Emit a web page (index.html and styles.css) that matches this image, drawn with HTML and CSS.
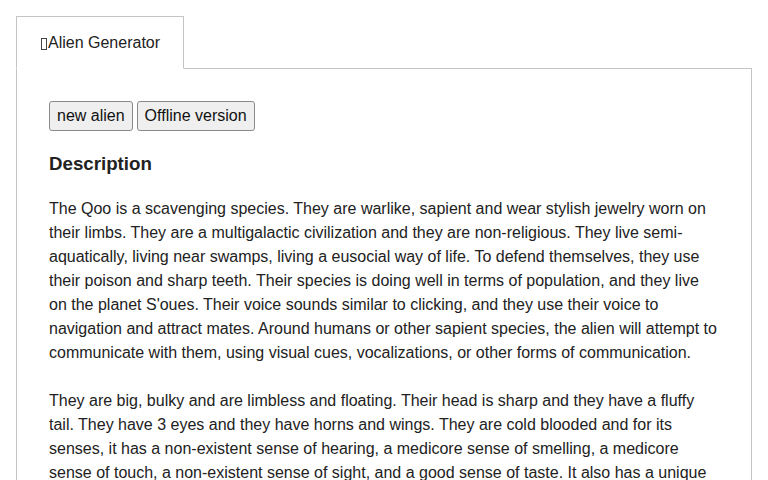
FILE: index.html
```html
<!DOCTYPE html>
<html lang="en">
<head>
<meta charset="utf-8">
<title>Alien Generator</title>
<link rel="stylesheet" href="styles.css">
</head>
<body>
<div class="page">
  <div class="tabs">
    <div class="tab"><span class="tofu"></span>Alien Generator</div>
  </div>
  <div class="panel">
    <div class="actions">
      <button class="btn">new alien</button>
      <button class="btn">Offline version</button>
    </div>
    <h3 class="heading">Description</h3>
    <p class="para">The Qoo is a scavenging species. They are warlike, sapient and wear stylish jewelry worn on their limbs. They are a multigalactic civilization and they are non-religious. They live semi-aquatically, living near swamps, living a eusocial way of life. To defend themselves, they use their poison and sharp teeth. Their species is doing well in terms of population, and they live on the planet S'oues. Their voice sounds similar to clicking, and they use their voice to navigation and attract mates. Around humans or other sapient species, the alien will attempt to communicate with them, using visual cues, vocalizations, or other forms of communication.</p>
    <p class="para">They are big, bulky and are limbless and floating. Their head is sharp and they have a fluffy tail. They have 3 eyes and they have horns and wings. They are cold blooded and for its senses, it has a non-existent sense of hearing, a medicore sense of smelling, a medicore sense of touch, a non-existent sense of sight, and a good sense of taste. It also has a unique ability to sense changes in the magnetic field around it.</p>
  </div>
</div>
</body>
</html>
```
FILE: styles.css
```css
html, body {
  margin: 0;
  padding: 0;
  background: #fff;
}
body {
  font-family: "Liberation Sans", Arial, sans-serif;
  font-size: 16px;
  color: #222;
  overflow: hidden;
}
.page {
  padding: 16px;
}
.tabs {
  display: flex;
}
.tab {
  position: relative;
  z-index: 1;
  margin-bottom: -1px;
  padding: 17px 23px 16px 24px;
  line-height: 18px;
  border: 1px solid #c4c4c4;
  border-bottom: 1px solid #fff;
  background: #fff;
  color: #222;
  display: flex;
  align-items: center;
}
.tofu {
  display: inline-block;
  width: 4px;
  height: 10px;
  border: 1px solid #444;
  margin: 1px 1px 0 0;
}
.panel {
  border: 1px solid #c4c4c4;
  padding: 32px 32px 40px 32px;
}
.actions {
  display: flex;
  gap: 4px;
}
.btn {
  font-family: "Liberation Sans", Arial, sans-serif;
  font-size: 16px;
  line-height: 18px;
  color: #111;
  background: #efefef;
  border: 1px solid #8a8a8a;
  border-radius: 3px;
  padding: 5px 7px;
  margin: 0;
}
.heading {
  font-size: 18.72px;
  font-weight: bold;
  margin: 22px 0 22px 0;
  line-height: 22px;
  color: #222;
}
.para {
  margin: 0 0 24px 0;
  line-height: 24px;
}
```
